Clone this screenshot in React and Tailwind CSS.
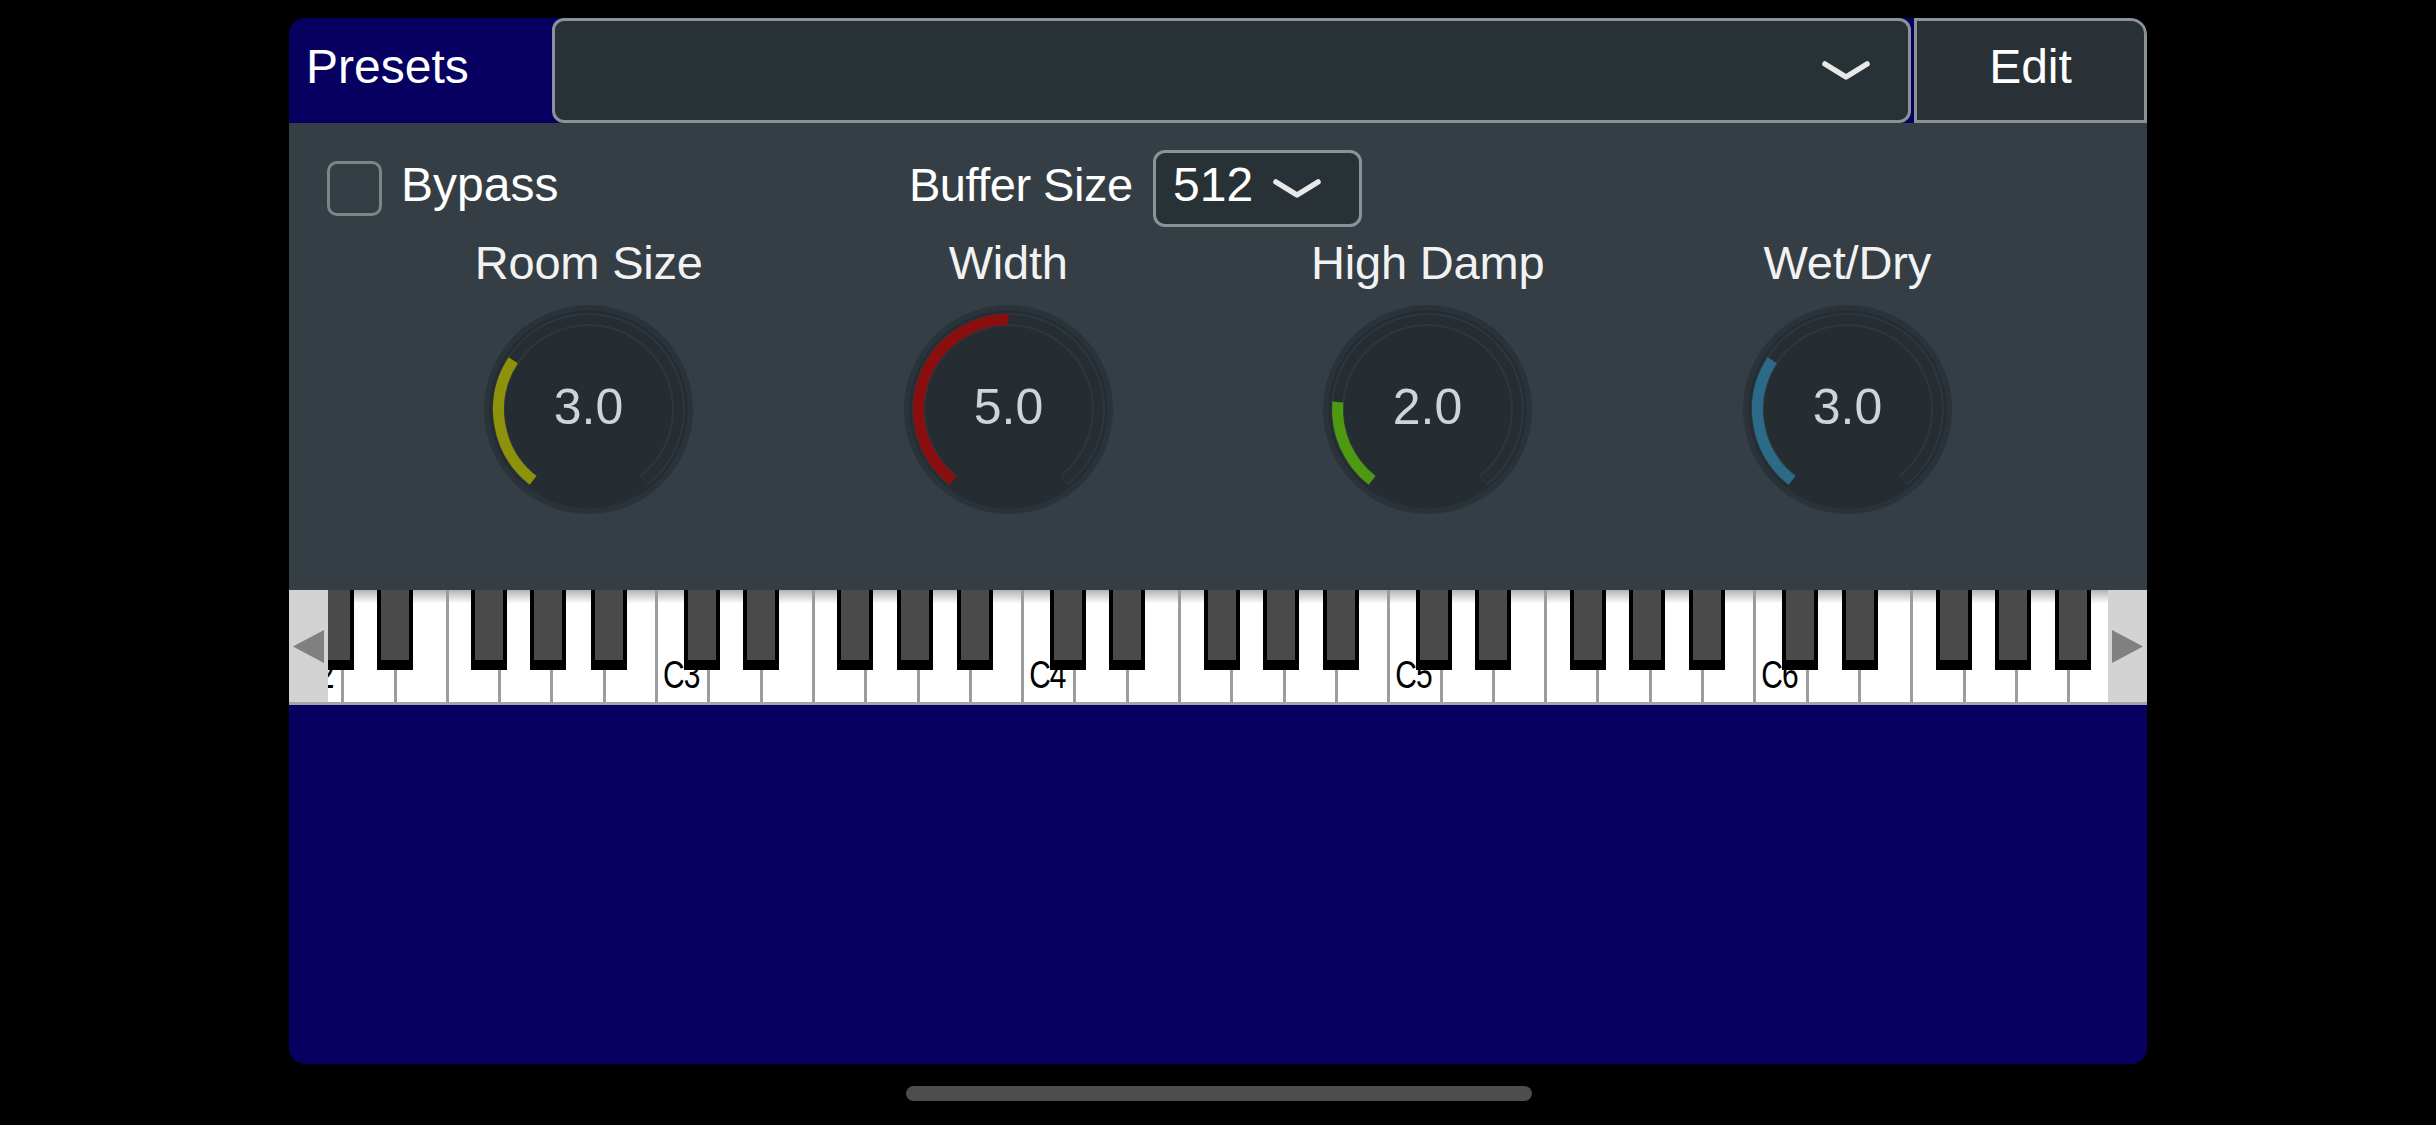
import React from 'react';

const KEY_W = 52.3;
const BLACK_OFFSETS = [0.897, 2.03, 3.83, 4.96, 6.11];

const knobs = [
    { label: 'Room Size', value: 3.0, color: '#8e920b' },
    { label: 'Width', value: 5.0, color: '#8b0e0e' },
    { label: 'High Damp', value: 2.0, color: '#4d9a12' },
    { label: 'Wet/Dry', value: 3.0, color: '#2c6b87' },
];

const arcPath = (c, r, a0, a1) => {
    const rad = (d) => (d * Math.PI) / 180;
    const x0 = c + r * Math.sin(rad(a0));
    const y0 = c - r * Math.cos(rad(a0));
    const x1 = c + r * Math.sin(rad(a1));
    const y1 = c - r * Math.cos(rad(a1));
    const large = a1 - a0 > 180 ? 1 : 0;
    return `M ${x0} ${y0} A ${r} ${r} 0 ${large} 1 ${x1} ${y1}`;
};

const Chevron = () => (
    <svg width="48" height="22" viewBox="0 0 48 22">
        <polyline points="3,4 24,17 45,4" fill="none" stroke="#e8e8e8" strokeWidth="5.5" strokeLinecap="round" strokeLinejoin="round" />
    </svg>
);

const Knob = ({ value, color }) => {
    const start = -142;
    const end = start + (value / 10) * 284;
    const c = 104.5;
    return (
        <svg width="209" height="209" viewBox="0 0 209 209">
            <circle cx={c} cy={c} r="104.5" fill="#2a3339" />
            <circle cx={c} cy={c} r="99" fill="#252d33" />
            {/* track */}
            <path d={arcPath(c, 90, -142, 142)} fill="none" stroke="#2d373d" strokeWidth="13" />
            <path d={arcPath(c, 90, -141.4, 141.4)} fill="none" stroke="#262e34" strokeWidth="9" />
            {/* value */}
            <path d={arcPath(c, 90, start, end)} fill="none" stroke={color} strokeWidth="11" />
            <text x={c} y="119" textAnchor="middle" fontSize="50" fill="#d0d4d6" fontFamily="'Liberation Sans', Arial, sans-serif">
                {value.toFixed(1)}
            </text>
        </svg>
    );
};

const Arrow = ({ dir }) => (
    <svg width="33" height="33" viewBox="0 0 33 33">
        {dir === 'left' ? (
            <polygon points="32,0 32,33 1,16.5" fill="#808080" />
        ) : (
            <polygon points="1,0 1,33 32,16.5" fill="#808080" />
        )}
    </svg>
);

const Keyboard = () => {
    const whites = Array.from({ length: 36 }, (_, i) => i);
    const blacks = [];
    for (let o = 0; o < 6; o++) {
        BLACK_OFFSETS.forEach((off) => blacks.push(o * 7 * KEY_W + off * KEY_W - 18));
    }

    return (
        <div className="relative h-[115px] overflow-hidden bg-white border-b-[3px] border-[#a3a3a3]">
            {/* White keys */}
            <div className="flex h-full">
                {whites.map((i) => (
                    <div
                        key={i}
                        className="relative h-full shrink-0 border-l-[3px] border-[#9c9c9c] bg-linear-to-b from-[#b4b4b4] via-white via-[12%] to-white"
                        style={{ width: KEY_W }}
                    >
                        {i % 7 === 0 && (
                            <span className="absolute left-[5px] bottom-[8px] text-[30px] leading-none text-black tracking-[-1px] scale-y-[1.3] origin-bottom">
                                C{2 + i / 7}
                            </span>
                        )}
                    </div>
                ))}
            </div>

            {/* Black keys */}
            {blacks.map((left, i) => (
                <div
                    key={i}
                    className="absolute top-0 w-[36px] h-[80px] bg-[#4a4a4a] border-x-[4px] border-b-[10px] border-black"
                    style={{ left }}
                />
            ))}

            {/* Scroll arrows */}
            <div className="absolute left-0 top-0 bottom-0 w-[39px] bg-[#d3d3d3] flex items-center justify-center">
                <Arrow dir="left" />
            </div>
            <div className="absolute right-0 top-0 bottom-0 w-[39px] bg-[#d3d3d3] flex items-center justify-center">
                <Arrow dir="right" />
            </div>
        </div>
    );
};

const App = () => {
    return (
        <div className="w-[2436px] h-[1125px] bg-black overflow-hidden font-['Liberation_Sans',Arial,sans-serif] text-white">
            <div className="ml-[289px] pt-[18px]">
                <div className="w-[1858px] h-[1046px] rounded-[16px] overflow-hidden flex flex-col">
                    {/* Header */}
                    <div className="h-[105px] flex bg-[#070060]">
                        <div className="w-[263px] pl-[17px] flex items-center">
                            <span className="text-[48px] leading-none mb-[8px]">Presets</span>
                        </div>
                        <div className="flex-1 border-[3px] border-[#8a9396] rounded-[12px] bg-[#283136] flex items-center justify-end pr-[38px]">
                            <Chevron />
                        </div>
                        <div className="w-[233px] ml-[3px] border-[3px] border-[#8a9396] rounded-tr-[16px] bg-[#293136] flex items-center justify-center">
                            <span className="text-[48px] leading-none mb-[8px]">Edit</span>
                        </div>
                    </div>

                    {/* Controls */}
                    <div className="h-[467px] bg-[#343e44] pt-[27px]">
                        <div className="h-[77px] flex items-center pl-[38px]">
                            <div className="w-[582px] flex items-center gap-[19px]">
                                <div className="w-[55px] h-[55px] rounded-[10px] border-[3px] border-[#7d8588]" />
                                <span className="text-[48px] leading-none mb-[8px]">Bypass</span>
                            </div>
                            <span className="w-[244px] text-[47px] leading-none tracking-[-0.5px] whitespace-nowrap mb-[8px]">Buffer Size</span>
                            <div className="w-[209px] h-[77px] border-[3px] border-[#8a9396] rounded-[12px] bg-[#283136] flex items-center pl-[17px] gap-[20px]">
                                <span className="text-[48px] leading-none mb-[8px]">512</span>
                                <Chevron />
                            </div>
                        </div>

                        <div className="grid grid-cols-4 px-[90px] mt-[12px]">
                            {knobs.map((k) => (
                                <div key={k.label} className="flex flex-col items-center">
                                    <span className="text-[47px] leading-none tracking-[-0.2px] h-[48px] whitespace-nowrap text-[#f2f2f2]">{k.label}</span>
                                    <div className="mt-[18px]">
                                        <Knob value={k.value} color={k.color} />
                                    </div>
                                </div>
                            ))}
                        </div>
                    </div>

                    <Keyboard />

                    <div className="flex-1 bg-[#070060]" />
                </div>
            </div>

            {/* Home indicator */}
            <div className="ml-[906px] mt-[22px] w-[626px] h-[15px] rounded-full bg-[#4d4d4d]" />
        </div>
    );
};

export default App;
